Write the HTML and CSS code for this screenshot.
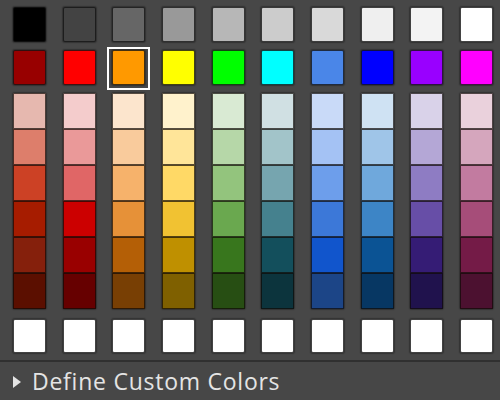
FILE: index.html
```html
<!DOCTYPE html>
<html>
<head>
<meta charset="utf-8">
<link rel="stylesheet" href="styles.css">
</head>
<body>
<div class="palette">
  <div class="row">
    <div class="sw" style="background:#000000"></div>
    <div class="sw" style="background:#434343"></div>
    <div class="sw" style="background:#666666"></div>
    <div class="sw" style="background:#999999"></div>
    <div class="sw" style="background:#b7b7b7"></div>
    <div class="sw" style="background:#cccccc"></div>
    <div class="sw" style="background:#d9d9d9"></div>
    <div class="sw" style="background:#efefef"></div>
    <div class="sw" style="background:#f3f3f3"></div>
    <div class="sw" style="background:#ffffff"></div>
  </div>
  <div class="row">
    <div class="sw" style="background:#980000"></div>
    <div class="sw" style="background:#ff0000"></div>
    <div class="sw selected" style="background:#ff9900"></div>
    <div class="sw" style="background:#ffff00"></div>
    <div class="sw" style="background:#00ff00"></div>
    <div class="sw" style="background:#00ffff"></div>
    <div class="sw" style="background:#4a86e8"></div>
    <div class="sw" style="background:#0000ff"></div>
    <div class="sw" style="background:#9900ff"></div>
    <div class="sw" style="background:#ff00ff"></div>
  </div>
  <div class="row stacks">
    <div class="stack">
      <div class="cell" style="background:#e6b8af"></div>
      <div class="cell" style="background:#dd7e6b"></div>
      <div class="cell" style="background:#cc4125"></div>
      <div class="cell" style="background:#a61c00"></div>
      <div class="cell" style="background:#85200c"></div>
      <div class="cell" style="background:#5b0f00"></div>
    </div>
    <div class="stack">
      <div class="cell" style="background:#f4cccc"></div>
      <div class="cell" style="background:#ea9999"></div>
      <div class="cell" style="background:#e06666"></div>
      <div class="cell" style="background:#cc0000"></div>
      <div class="cell" style="background:#990000"></div>
      <div class="cell" style="background:#660000"></div>
    </div>
    <div class="stack">
      <div class="cell" style="background:#fce5cd"></div>
      <div class="cell" style="background:#f9cb9c"></div>
      <div class="cell" style="background:#f6b26b"></div>
      <div class="cell" style="background:#e69138"></div>
      <div class="cell" style="background:#b45f06"></div>
      <div class="cell" style="background:#783f04"></div>
    </div>
    <div class="stack">
      <div class="cell" style="background:#fff2cc"></div>
      <div class="cell" style="background:#ffe599"></div>
      <div class="cell" style="background:#ffd966"></div>
      <div class="cell" style="background:#f1c232"></div>
      <div class="cell" style="background:#bf9000"></div>
      <div class="cell" style="background:#7f6000"></div>
    </div>
    <div class="stack">
      <div class="cell" style="background:#d9ead3"></div>
      <div class="cell" style="background:#b6d7a8"></div>
      <div class="cell" style="background:#93c47d"></div>
      <div class="cell" style="background:#6aa84f"></div>
      <div class="cell" style="background:#38761d"></div>
      <div class="cell" style="background:#274e13"></div>
    </div>
    <div class="stack">
      <div class="cell" style="background:#d0e0e3"></div>
      <div class="cell" style="background:#a2c4c9"></div>
      <div class="cell" style="background:#76a5af"></div>
      <div class="cell" style="background:#45818e"></div>
      <div class="cell" style="background:#134f5c"></div>
      <div class="cell" style="background:#0c343d"></div>
    </div>
    <div class="stack">
      <div class="cell" style="background:#c9daf8"></div>
      <div class="cell" style="background:#a4c2f4"></div>
      <div class="cell" style="background:#6d9eeb"></div>
      <div class="cell" style="background:#3c78d8"></div>
      <div class="cell" style="background:#1155cc"></div>
      <div class="cell" style="background:#1c4587"></div>
    </div>
    <div class="stack">
      <div class="cell" style="background:#cfe2f3"></div>
      <div class="cell" style="background:#9fc5e8"></div>
      <div class="cell" style="background:#6fa8dc"></div>
      <div class="cell" style="background:#3d85c6"></div>
      <div class="cell" style="background:#0b5394"></div>
      <div class="cell" style="background:#073763"></div>
    </div>
    <div class="stack">
      <div class="cell" style="background:#d9d2e9"></div>
      <div class="cell" style="background:#b4a7d6"></div>
      <div class="cell" style="background:#8e7cc3"></div>
      <div class="cell" style="background:#674ea7"></div>
      <div class="cell" style="background:#351c75"></div>
      <div class="cell" style="background:#20124d"></div>
    </div>
    <div class="stack">
      <div class="cell" style="background:#ead1dc"></div>
      <div class="cell" style="background:#d5a6bd"></div>
      <div class="cell" style="background:#c27ba0"></div>
      <div class="cell" style="background:#a64d79"></div>
      <div class="cell" style="background:#741b47"></div>
      <div class="cell" style="background:#4c1130"></div>
    </div>
  </div>
  <div class="row custom">
    <div class="sw white"></div>
    <div class="sw white"></div>
    <div class="sw white"></div>
    <div class="sw white"></div>
    <div class="sw white"></div>
    <div class="sw white"></div>
    <div class="sw white"></div>
    <div class="sw white"></div>
    <div class="sw white"></div>
    <div class="sw white"></div>
  </div>
</div>
<div class="footer">
  <span class="tri"></span>
  <span class="label">Define Custom Colors</span>
</div>
</body>
</html>
```

FILE: styles.css
```css
html, body {
  margin: 0;
  padding: 0;
  background: #474747;
  width: 500px;
  height: 400px;
  overflow: hidden;
}

.palette {
  padding: 7px 7px 0 13px;
  display: flex;
  flex-direction: column;
  gap: 8px;
}

.row {
  display: grid;
  grid-template-columns: repeat(10, 33px);
  column-gap: 16.67px;
  height: 35px;
}

.row.stacks {
  height: 216px;
}

.row.custom {
  margin-top: 2px;
  height: 34px;
}

.sw {
  position: relative;
  box-sizing: border-box;
  border: 1px solid rgba(20, 20, 20, 0.8);
  border-radius: 2px;
  box-shadow: 0 0 1px 1px rgba(30, 30, 30, 0.5);
}

.sw.white {
  background: #ffffff;
}

.sw.selected::after {
  content: "";
  position: absolute;
  left: -6px;
  top: -4px;
  width: 43px;
  height: 43px;
  box-sizing: border-box;
  border: 2.5px solid #ffffff;
}

.stack {
  display: flex;
  flex-direction: column;
  border-radius: 2px;
  box-shadow: 0 0 1px 1px rgba(30, 30, 30, 0.5);
}

.cell {
  flex: 1;
  box-sizing: border-box;
  border: 1px solid rgba(15, 10, 5, 0.7);
}

.footer {
  margin-top: 7px;
  border-top: 2px solid #303030;
  height: 38px;
  display: flex;
  align-items: center;
  padding-left: 13px;
  gap: 11px;
}

.tri {
  width: 0;
  height: 0;
  border-top: 6.5px solid transparent;
  border-bottom: 6.5px solid transparent;
  border-left: 8px solid #e4e4e4;
  margin-top: 1px;
}

.label {
  font-family: "Open Sans", "Noto Sans", sans-serif;
  font-size: 23px;
  color: #e4e4e4;
  letter-spacing: 0.75px;
}
```
